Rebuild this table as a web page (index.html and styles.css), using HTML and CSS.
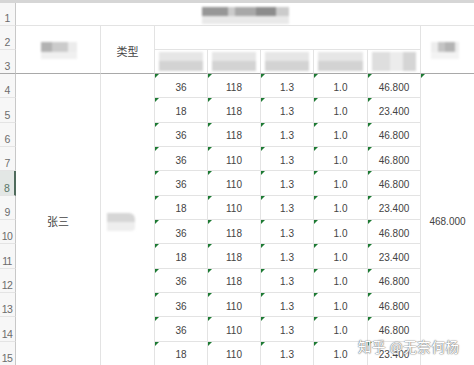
FILE: index.html
```html
<!DOCTYPE html>
<html lang="zh">
<head>
<meta charset="utf-8">
<title>Sheet</title>
<link rel="stylesheet" href="styles.css">
</head>
<body>
<div class="sheet">
  <div class="band"></div>

  <div class="c rh">1</div>
  <div class="c title"><span class="blur blur-title"></span></div>

  <div class="c rh">2</div>
  <div class="c name-h r3"><span class="blur blur-name"></span></div>
  <div class="c type-h r3">类型</div>
  <div class="c group-h"></div>
  <div class="c total-h r3"><span class="blur blur-total"></span></div>

  <div class="c rh r3">3</div>
  <div class="c sub r3"><span class="blur blur-sub"></span></div>
  <div class="c sub r3"><span class="blur blur-sub"></span></div>
  <div class="c sub r3"><span class="blur blur-sub"></span></div>
  <div class="c sub r3"><span class="blur blur-sub"></span></div>
  <div class="c sub r3"><span class="blur blur-sub light"></span></div>

  <div class="c rh">4</div>
  <div class="c name">张三</div>
  <div class="c type"><span class="blur blur-type"></span></div>
  <div class="c n">36</div><div class="c n">118</div><div class="c n">1.3</div><div class="c n">1.0</div><div class="c n">46.800</div>
  <div class="c n total">468.000</div>

  <div class="c rh">5</div>
  <div class="c n">18</div><div class="c n">118</div><div class="c n">1.3</div><div class="c n">1.0</div><div class="c n">23.400</div>

  <div class="c rh">6</div>
  <div class="c n">36</div><div class="c n">118</div><div class="c n">1.3</div><div class="c n">1.0</div><div class="c n">46.800</div>

  <div class="c rh">7</div>
  <div class="c n">36</div><div class="c n">110</div><div class="c n">1.3</div><div class="c n">1.0</div><div class="c n">46.800</div>

  <div class="c rh sel">8</div>
  <div class="c n">36</div><div class="c n">110</div><div class="c n">1.3</div><div class="c n">1.0</div><div class="c n">46.800</div>

  <div class="c rh">9</div>
  <div class="c n">18</div><div class="c n">110</div><div class="c n">1.3</div><div class="c n">1.0</div><div class="c n">23.400</div>

  <div class="c rh">10</div>
  <div class="c n">36</div><div class="c n">118</div><div class="c n">1.3</div><div class="c n">1.0</div><div class="c n">46.800</div>

  <div class="c rh">11</div>
  <div class="c n">18</div><div class="c n">118</div><div class="c n">1.3</div><div class="c n">1.0</div><div class="c n">23.400</div>

  <div class="c rh">12</div>
  <div class="c n">36</div><div class="c n">118</div><div class="c n">1.3</div><div class="c n">1.0</div><div class="c n">46.800</div>

  <div class="c rh">13</div>
  <div class="c n">36</div><div class="c n">110</div><div class="c n">1.3</div><div class="c n">1.0</div><div class="c n">46.800</div>

  <div class="c rh">14</div>
  <div class="c n">36</div><div class="c n">110</div><div class="c n">1.3</div><div class="c n">1.0</div><div class="c n">46.800</div>

  <div class="c rh">15</div>
  <div class="c n">18</div><div class="c n">110</div><div class="c n">1.3</div><div class="c n">1.0</div><div class="c n">23.400</div>
</div>
<div class="watermark">知乎 @无奈何杨</div>
</body>
</html>
```

FILE: styles.css
```css
* { box-sizing: border-box; margin: 0; padding: 0; }
html, body { background: #fff; }
body {
  width: 474px;
  height: 365px;
  overflow: hidden;
  position: relative;
  font-family: "Liberation Sans", Arial, "Noto Sans CJK SC", sans-serif;
}
.sheet {
  display: grid;
  grid-template-columns: 16px 85px 54px 53px 53px 53px 54px 53px 53px;
  grid-template-rows: 3px 23px 24px 24px repeat(12, 24.33px);
}
.band { grid-column: 1 / -1; background: #d6d6d6; }

.c {
  position: relative;
  display: flex;
  align-items: center;
  justify-content: center;
  border-right: 1px solid #e3e3e3;
  border-bottom: 1px solid #e3e3e3;
  color: #444;
  font-size: 10px;
}
.rh {
  grid-column: 1;
  background: #f7f7f7;
  border-right-color: #c8c8c8;
  border-bottom-color: #e4e4e4;
  color: #6c6c6c;
  font-size: 10.5px;
  letter-spacing: -0.6px;
  align-items: flex-end;
  padding-bottom: 1px;
  padding-right: 1px;
}
.rh.sel {
  background: #e3e7e5;
  color: #587565;
  border-right: 2px solid #4f6b5c;
}
.r3 { border-bottom-color: #a9a9a9; }

.title { grid-column: 2 / -1; border-right: none; }
.name-h { grid-row: span 2; }
.type-h {
  grid-row: span 2;
  font-family: "Noto Sans CJK SC", sans-serif;
  font-size: 11px;
  color: #444;
  padding-top: 3px;
}
.group-h { grid-column: span 5; }
.total-h { grid-row: span 2; border-right: none; }

.name {
  grid-row: span 12;
  font-family: "Noto Sans CJK SC", sans-serif;
  font-size: 11px;
  color: #444;
  padding-top: 2px;
  border-bottom: none;
}
.type { grid-row: span 12; border-bottom: none; }
.total { grid-row: span 12; border-right: none; border-bottom: none; }

.n { padding-top: 3px; }
.n::before {
  content: "";
  position: absolute;
  top: 0;
  left: 0;
  border-top: 4px solid #1d7a33;
  border-right: 4px solid transparent;
}

.blur { display: block; filter: blur(0.8px); }
.blur-title {
  width: 87px;
  height: 17px;
  margin-top: 2px;
  background:
    linear-gradient(to right, #979797 0 30%, #cbcbcb 30% 38%, #a8a8a8 38% 62%, #8c8c8c 62% 85%, #cbcbcb 85%) top / 100% 55% no-repeat,
    #e9e9e9;
}
.blur-name {
  width: 36px;
  height: 17px;
  margin-top: 2px;
  margin-left: 2px;
  background:
    linear-gradient(to right, #b2b2b2 0 30%, #cbcbcb 30% 75%, #ececec 75%) top / 100% 58% no-repeat,
    #f0f0f0;
}
.blur-total {
  width: 28px;
  height: 17px;
  margin-top: 2px;
  margin-left: -6px;
  background:
    linear-gradient(to right, #ededed 0 25%, #c4c4c4 25% 50%, #b4b4b4 50% 85%, #ededed 85%) top / 100% 58% no-repeat,
    #f3f3f3;
}
.sub { padding: 0 4px; }
.blur-sub {
  width: 100%;
  height: 19px;
  background: linear-gradient(to bottom, #e6e6e6 0 45%, #d3d3d3 45%);
}
.blur-sub.light {
  background: linear-gradient(to right, #dedede 0 40%, #ececec 40% 70%, #d5d5d5 70%);
}
.blur-type {
  width: 28px;
  height: 18px;
  margin-left: -14px;
  margin-top: 4px;
  border-radius: 0 6px 4px 0;
  background: linear-gradient(to bottom, #d6d6d6 0 50%, #eeeeee 50%);
}

.watermark {
  position: absolute;
  left: 358px;
  top: 336px;
  font-family: "Noto Sans CJK SC", sans-serif;
  font-size: 13.5px;
  letter-spacing: 0.6px;
  color: #fff;
  text-shadow: 0 0 1px #7a7a7a, 0 0 1px #7a7a7a, 0 0 2px #a0a0a0;
  white-space: nowrap;
}
```
